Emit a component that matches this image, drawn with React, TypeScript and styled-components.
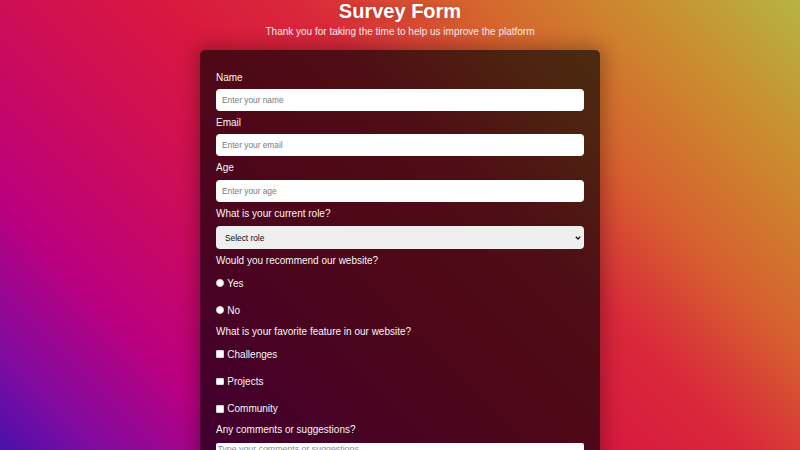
import React from "react";
import styled, { createGlobalStyle } from "styled-components";

const GlobalStyle = createGlobalStyle`
  html, body {
    margin: 0;
    padding: 0;
  }
  body {
    min-height: 100vh;
    font-family: "Liberation Sans", Arial, sans-serif;
    color: #f5f5f5;
    background: linear-gradient(
      45deg,
      #4a10ac 0%,
      #820aa0 8%,
      #bb007e 20%,
      #cc0c5a 34%,
      #d8183f 48%,
      #d9283a 60%,
      #d6602e 72%,
      #cc8a2e 86%,
      #b6b442 100%
    );
    background-attachment: fixed;
  }
`;

const Page = styled.main`
  display: flex;
  flex-direction: column;
  align-items: center;
`;

const Header = styled.header`
  display: flex;
  flex-direction: column;
  align-items: center;
  text-align: center;
`;

const Title = styled.h1`
  margin: 0;
  font-size: 20px;
  font-weight: 700;
  line-height: 22.3px;
  color: #ffffff;
  text-shadow: 0 0 8px rgba(0, 0, 0, 0.15);
`;

const Subtitle = styled.p`
  margin: 3.3px 0 0;
  font-size: 10px;
  line-height: 11.2px;
  color: #fbeeee;
`;

const Card = styled.form`
  box-sizing: border-box;
  width: 400px;
  margin-top: 13.2px;
  padding: 16px 16px 24px;
  border-radius: 5px;
  background: rgba(0, 0, 0, 0.64);
  box-shadow: 0 0 18px 4px rgba(0, 0, 0, 0.28);
  display: flex;
  flex-direction: column;
`;

const Label = styled.label<{ $mt?: number }>`
  display: block;
  margin: ${(p) => 6 + (p.$mt ?? 0)}px 0 6px;
  font-size: 10px;
  line-height: 11.2px;
  color: #f5f5f5;
`;

const TextInput = styled.input`
  box-sizing: border-box;
  width: 100%;
  height: 22px;
  margin: 0;
  padding: 0 6px;
  border: none;
  border-radius: 4px;
  background: #ffffff;
  font-family: "Liberation Sans", Arial, sans-serif;
  font-size: 8.33px;
  color: #222;
  outline: none;
  &::placeholder {
    color: #7a7a7a;
  }
`;

const SelectWrap = styled.div`
  position: relative;
  margin-top: 1.5px;
  height: 22.5px;
`;

const Select = styled.select`
  appearance: none;
  box-sizing: border-box;
  width: 100%;
  height: 100%;
  margin: 0;
  padding: 0 16px 0 9px;
  border: none;
  border-radius: 4px;
  background: #efefef;
  font-family: "Liberation Sans", Arial, sans-serif;
  font-size: 8.33px;
  color: #111;
  outline: none;
`;

const Chevron = styled.svg`
  position: absolute;
  right: 3px;
  top: 50%;
  width: 6px;
  height: 4px;
  margin-top: -1.5px;
  pointer-events: none;
`;

const OptionGroup = styled.div`
  display: flex;
  flex-direction: column;
  gap: 16px;
  padding: 5.5px 0 4px;
`;

const OptionRow = styled.label`
  display: flex;
  align-items: center;
  gap: 3.5px;
  font-size: 10px;
  line-height: 11.2px;
  color: #f5f5f5;
`;

const Choice = styled.input<{ $round?: boolean }>`
  appearance: none;
  box-sizing: border-box;
  flex: none;
  width: 7.8px;
  height: 7.8px;
  margin: 0;
  border: 0.6px solid #d8d8d8;
  border-radius: ${(p) => (p.$round ? "50%" : "1px")};
  background: #ffffff;
`;

const TextArea = styled.textarea`
  box-sizing: border-box;
  width: 100%;
  height: 60px;
  margin-top: 1.3px;
  padding: 1px 1.5px;
  border: none;
  border-radius: 2px;
  background: #ffffff;
  font-family: "Liberation Sans", Arial, sans-serif;
  font-size: 8.8px;
  line-height: 10px;
  resize: none;
  outline: none;
  &::placeholder {
    color: #8a8a8a;
  }
`;

const textFields = [
  { id: "name", label: "Name", type: "text", placeholder: "Enter your name" },
  { id: "email", label: "Email", type: "email", placeholder: "Enter your email" },
  { id: "age", label: "Age", type: "number", placeholder: "Enter your age" },
];

const features = ["Challenges", "Projects", "Community"];

export default function App() {
  return (
    <>
      <GlobalStyle />
      <Page>
        <Header>
          <Title>Survey Form</Title>
          <Subtitle>Thank you for taking the time to help us improve the platform</Subtitle>
        </Header>
        <Card onSubmit={(e) => e.preventDefault()}>
          {textFields.map((f) => (
            <React.Fragment key={f.id}>
              <Label htmlFor={f.id}>{f.label}</Label>
              <TextInput id={f.id} type={f.type} placeholder={f.placeholder} />
            </React.Fragment>
          ))}
          <Label htmlFor="role">What is your current role?</Label>
          <SelectWrap>
            <Select id="role" defaultValue="">
              <option value="" disabled>
                Select role
              </option>
              <option value="student">Student</option>
              <option value="full-time">Full Time Job</option>
              <option value="learner">Full Time Learner</option>
              <option value="other">Other</option>
            </Select>
            <Chevron viewBox="0 0 6 4">
              <path d="M0.8 0.8 L3 3 L5.2 0.8" fill="none" stroke="#111" strokeWidth="1.3" />
            </Chevron>
          </SelectWrap>
          <Label>Would you recommend our website?</Label>
          <OptionGroup>
            <OptionRow>
              <Choice $round type="radio" name="recommend" value="yes" />
              Yes
            </OptionRow>
            <OptionRow>
              <Choice $round type="radio" name="recommend" value="no" />
              No
            </OptionRow>
          </OptionGroup>
          <Label>What is your favorite feature in our website?</Label>
          <OptionGroup>
            {features.map((f) => (
              <OptionRow key={f}>
                <Choice type="checkbox" value={f.toLowerCase()} />
                {f}
              </OptionRow>
            ))}
          </OptionGroup>
          <Label htmlFor="comments">Any comments or suggestions?</Label>
          <TextArea id="comments" placeholder="Type your comments or suggestions" />
        </Card>
      </Page>
    </>
  );
}
